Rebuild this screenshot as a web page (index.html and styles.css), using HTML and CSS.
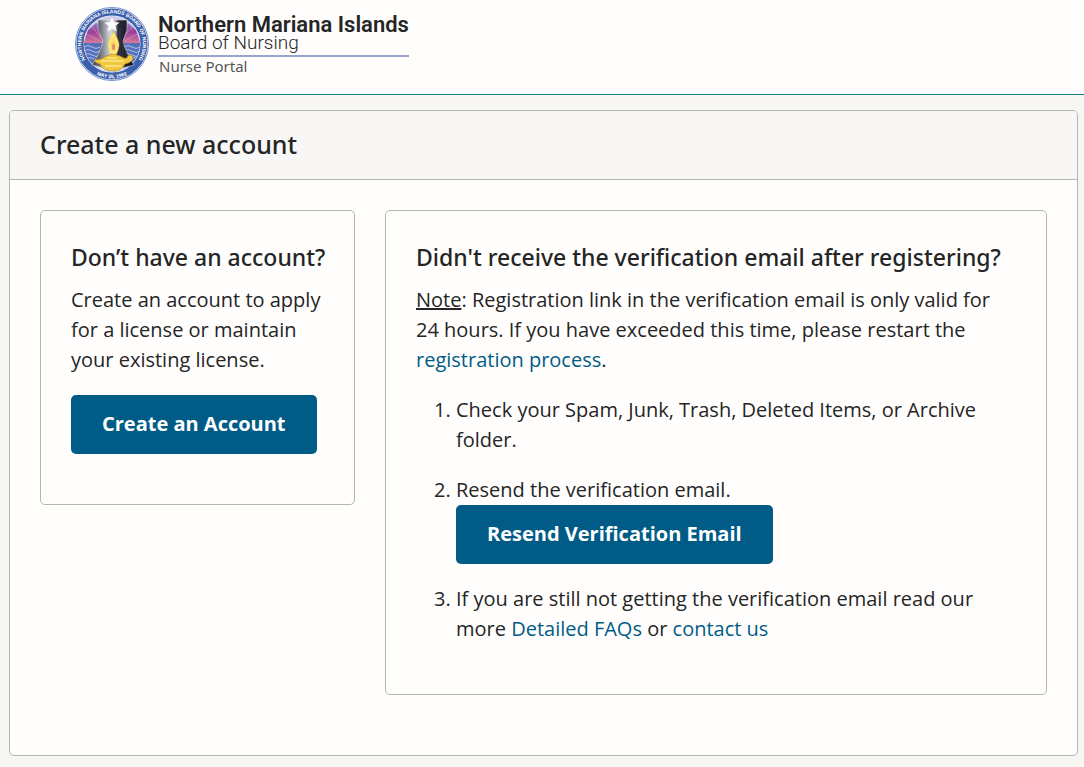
FILE: index.html
```html
<!DOCTYPE html>
<html lang="en">
<head>
<meta charset="utf-8">
<meta name="viewport" content="width=device-width, initial-scale=1">
<title>Nurse Portal - Create a new account</title>
<link rel="stylesheet" href="styles.css">
</head>
<body>
<header class="site-header">
  <svg class="seal" viewBox="0 0 76 76" role="img" aria-label="Board of Nursing seal">
    <defs>
      <linearGradient id="sky" x1="0" y1="0" x2="0" y2="1">
        <stop offset="0" stop-color="#8d7fc8"/>
        <stop offset=".4" stop-color="#9a3f9c"/>
        <stop offset="1" stop-color="#e0849c"/>
      </linearGradient>
      <linearGradient id="stone" x1="0" y1="0" x2="1" y2="0">
        <stop offset="0" stop-color="#3c3e48"/>
        <stop offset=".2" stop-color="#6f727c"/>
        <stop offset=".45" stop-color="#dcdde4"/>
        <stop offset=".56" stop-color="#a9aab4"/>
        <stop offset=".62" stop-color="#2b2b38"/>
        <stop offset="1" stop-color="#12121c"/>
      </linearGradient>
      <radialGradient id="flame">
        <stop offset="0" stop-color="#fbd25a"/>
        <stop offset="1" stop-color="#fdf08c"/>
      </radialGradient>
      <clipPath id="disc"><circle cx="38" cy="38" r="28"/></clipPath>
      <path id="arc-top" d="M15.500 59A30.800 30.800 0 1 1 60.500 59"/>
      <path id="arc-bottom" d="M24 69.300A34.200 34.200 0 0 0 52 69.300"/>
    </defs>
    <circle cx="38" cy="38" r="36.500" fill="#f3f6fc" stroke="#6d8fcb"/>
    <circle cx="38" cy="38" r="32" fill="none" stroke="#3c60ab" stroke-width="7"/>
    <g clip-path="url(#disc)">
      <path fill="#cfc9ea" d="M8 8h60v32H8z"/>
      <path fill="url(#sky)" d="M10 36l4-12 8-7 8 2 2 19-22 1zM66 36l-4-12-8-7-8 2-2 19 22 1z"/>
      <path d="M13 28l16 9M18 21l12 14M63 28l-16 9M58 21L46 35" stroke="#d98bb6" stroke-width=".8"/>
      <path fill="#5570b8" d="M8 37h60v34H8z"/>
      <path d="M10 41q4-3 8 0t8 0M50 41q4-3 8 0t8 0M10 45q4-3 8 0t8 0M50 45q4-3 8 0t8 0M10 49q4-3 8 0t8 0M50 49q4-3 8 0t8 0M12 53q4-3 8 0M56 53q4-3 8 0" stroke="#a9bfe8" fill="none"/>
      <path fill="#e5e9f4" d="M16 57q22 9 44 0v12H16z"/>
    </g>
    <path fill="url(#stone)" stroke="#d5d8e6" stroke-width=".6" d="M24 14h29v10l-4 11q2 10 11 24-20 7-42 0 9-14 11-24l-5-11z"/>
    <path d="M46 22v34M49 34v24M52 44v14" stroke="#4b4c5c" stroke-width=".6"/>
    <path fill="#fff" d="m38 11 2 5.300 5.700.2-4.500 3.500 1.600 5.500-4.800-3.100-4.800 3.100 1.600-5.500-4.500-3.500 5.700-.2z"/>
    <path fill="url(#flame)" stroke="#e8bd3c" stroke-width=".5" d="M39.500 26q-5.500 8-5.500 13.500 1 8 5.500 11.500 4.500-3.500 5.500-11.500Q45 34 39.500 26z"/>
    <ellipse cx="39.500" cy="41" rx="1.600" ry="3.200" fill="#ea8a6e"/>
    <path fill="#efc83c" stroke="#a9801c" stroke-width=".6" d="M20 54q8 0 12-4l7-2 7 2q4 3 7 2 0-3 3-3t3 3q0 4-8 6-3 7-12 7-10 0-13-7-5-1-6-4z"/>
    <path stroke="#fff7bd" stroke-width="1.200" d="M27 55h23M31 60h16M33 52h10" fill="none"/>
    <text class="seal-text"><textPath href="#arc-top" startOffset="50%">NORTHERN MARIANA ISLANDS BOARD OF NURSING</textPath></text>
    <text class="seal-text"><textPath href="#arc-bottom" startOffset="50%">MAY 25, 1982</textPath></text>
  </svg>
  <div class="brand">
    <div class="brand-place">Northern Mariana Islands</div>
    <div class="brand-board">Board of Nursing</div>
    <div class="brand-portal">Nurse Portal</div>
  </div>
</header>
<main class="panel">
  <div class="panel-head">
    <h1>Create a new account</h1>
  </div>
  <div class="panel-body">
    <section class="card">
      <h2>Don’t have an account?</h2>
      <p>Create an account to apply for a license or maintain your existing license.</p>
      <button class="btn" type="button">Create an Account</button>
    </section>
    <section class="card">
      <h2>Didn't receive the verification email after registering?</h2>
      <p><u>Note</u>: Registration link in the verification email is only valid for 24&nbsp;hours. If you have exceeded this time, please restart the <a href="#">registration process</a>.</p>
      <ol>
        <li>Check your Spam, Junk, Trash, Deleted Items, or Archive folder.</li>
        <li>Resend the verification email.<br><button class="btn" type="button">Resend Verification Email</button></li>
        <li>If you are still not getting the verification email read our more <a href="#">Detailed FAQs</a> or <a href="#">contact us</a></li>
      </ol>
    </section>
  </div>
</main>
</body>
</html>
```
FILE: styles.css
```css
* {
  box-sizing: border-box;
}

body {
  margin: 0;
  background: #f7f6f3;
  color: #252525;
  font: 20px/30px "Open Sans", "Noto Sans", sans-serif;
}

.site-header {
  display: flex;
  align-items: flex-start;
  gap: 8px;
  padding: 6px 74px 12px;
  background: #fffefd;
  border-bottom: 1px solid #17817f;
}

.seal {
  width: 76px;
  height: 76px;
}

.seal-text {
  font: bold 5px "Liberation Sans", sans-serif;
  fill: #fff;
  text-anchor: middle;
}

.brand {
  padding-top: 8px;
  font-family: Roboto, sans-serif;
}

.brand-place {
  font-size: 22px;
  font-weight: 600;
  line-height: 22px;
}

.brand-board {
  padding-bottom: 5px;
  border-bottom: 2px solid #9ba3cf;
  font-size: 19px;
  font-weight: 300;
  line-height: 14px;
}

.brand-portal {
  padding-left: 1px;
  color: #555;
  font: 15px/18px "Noto Sans", sans-serif;
}

.panel {
  margin: 15px 6px 11px 9px;
  background: #fffefd;
  border: 1px solid #b5b5b3;
  border-radius: 5px;
  overflow: hidden;
}

.panel-head {
  padding: 16px 30px 18px;
  background: #f8f7f6;
  border-bottom: 1px solid #b5b5b3;
}

h1,
h2 {
  margin: 0;
  font-family: "Noto Sans", sans-serif;
  font-weight: 500;
}

h1 {
  font-size: 25px;
  line-height: 34px;
}

h2 {
  margin-bottom: 12px;
  font-size: 23px;
  line-height: 32px;
}

.panel-body {
  display: grid;
  grid-template-columns: 315fr 662fr;
  align-items: start;
  gap: 30px;
  padding: 30px 30px 60px;
}

.card {
  padding: 30px 24px 50px 30px;
  border: 1px solid #b5b5b3;
  border-radius: 5px;
}

p {
  margin: 0 0 20px;
}

a {
  color: #005c87;
  text-decoration: none;
}

ol {
  margin: 0;
  padding-left: 40px;
}

li + li {
  margin-top: 20px;
}

.btn {
  display: block;
  padding: 14px 31px 15px;
  background: #005c87;
  border: 0;
  border-radius: 5px;
  color: #fff;
  font: bold 20px/30px "Open Sans", sans-serif;
  white-space: nowrap;
  cursor: pointer;
}
```
